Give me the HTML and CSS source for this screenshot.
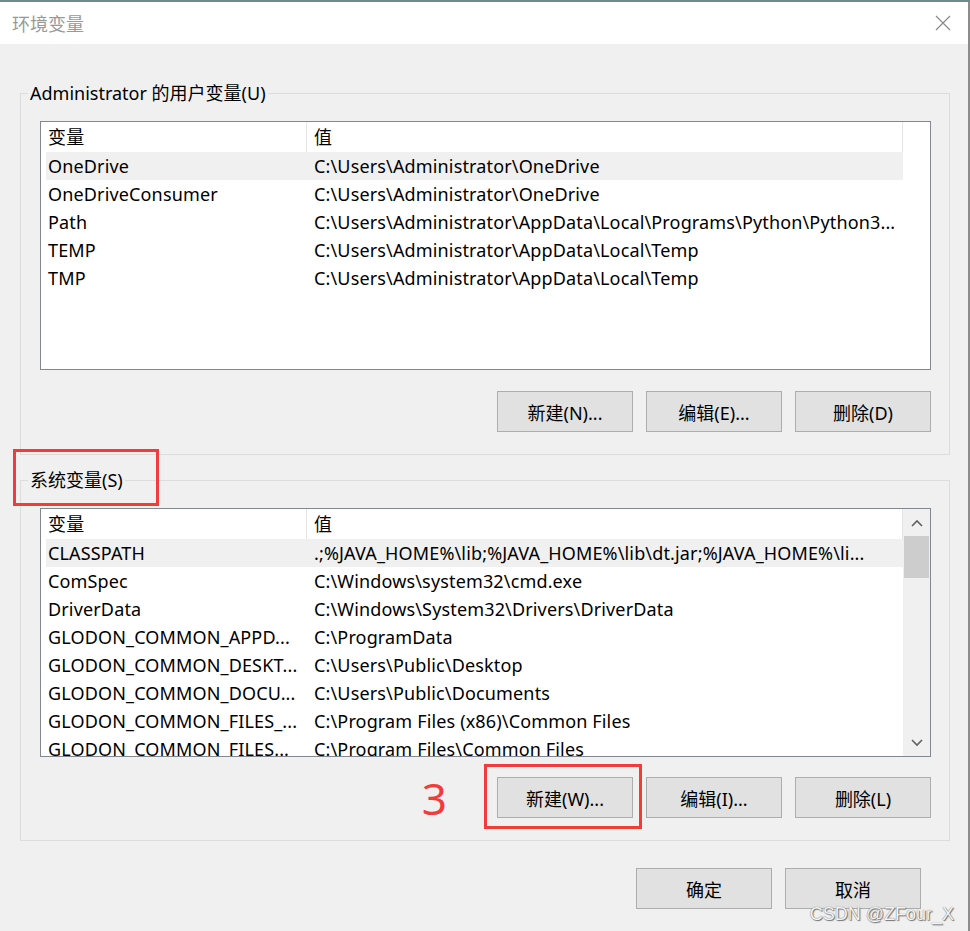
FILE: index.html
```html
<!DOCTYPE html>
<html lang="zh-CN">
<head>
    <meta charset="UTF-8">
    <title>环境变量</title>
    <link rel="stylesheet" href="styles.css">
</head>
<body>
    <div class="window">
        <div class="titlebar">
            <span class="title">环境变量</span>
            <svg class="close" width="16" height="16" viewBox="0 0 16 16">
                <path d="M1 1 L15 15 M15 1 L1 15" stroke="#8a8a8a" stroke-width="1.2" fill="none"/>
            </svg>
        </div>

        <div class="content">
            <fieldset class="group">
                <legend>Administrator 的用户变量(U)</legend>
                <div class="list">
                    <div class="list-body">
                        <div class="row head">
                            <div class="cell name">变量</div>
                            <div class="cell value">值</div>
                        </div>
                        <div class="row selected">
                            <div class="cell name">OneDrive</div>
                            <div class="cell value">C:\Users\Administrator\OneDrive</div>
                        </div>
                        <div class="row">
                            <div class="cell name">OneDriveConsumer</div>
                            <div class="cell value">C:\Users\Administrator\OneDrive</div>
                        </div>
                        <div class="row">
                            <div class="cell name">Path</div>
                            <div class="cell value">C:\Users\Administrator\AppData\Local\Programs\Python\Python3...</div>
                        </div>
                        <div class="row">
                            <div class="cell name">TEMP</div>
                            <div class="cell value">C:\Users\Administrator\AppData\Local\Temp</div>
                        </div>
                        <div class="row">
                            <div class="cell name">TMP</div>
                            <div class="cell value">C:\Users\Administrator\AppData\Local\Temp</div>
                        </div>
                    </div>
                </div>
                <div class="actions">
                    <button>新建(N)...</button>
                    <button>编辑(E)...</button>
                    <button>删除(D)</button>
                </div>
            </fieldset>

            <fieldset class="group system">
                <legend class="marked">系统变量(S)</legend>
                <div class="list">
                    <div class="list-body">
                        <div class="row head">
                            <div class="cell name">变量</div>
                            <div class="cell value">值</div>
                        </div>
                        <div class="row selected">
                            <div class="cell name">CLASSPATH</div>
                            <div class="cell value">.;%JAVA_HOME%\lib;%JAVA_HOME%\lib\dt.jar;%JAVA_HOME%\li...</div>
                        </div>
                        <div class="row">
                            <div class="cell name">ComSpec</div>
                            <div class="cell value">C:\Windows\system32\cmd.exe</div>
                        </div>
                        <div class="row">
                            <div class="cell name">DriverData</div>
                            <div class="cell value">C:\Windows\System32\Drivers\DriverData</div>
                        </div>
                        <div class="row">
                            <div class="cell name">GLODON_COMMON_APPD...</div>
                            <div class="cell value">C:\ProgramData</div>
                        </div>
                        <div class="row">
                            <div class="cell name">GLODON_COMMON_DESKT...</div>
                            <div class="cell value">C:\Users\Public\Desktop</div>
                        </div>
                        <div class="row">
                            <div class="cell name">GLODON_COMMON_DOCU...</div>
                            <div class="cell value">C:\Users\Public\Documents</div>
                        </div>
                        <div class="row">
                            <div class="cell name">GLODON_COMMON_FILES_...</div>
                            <div class="cell value">C:\Program Files (x86)\Common Files</div>
                        </div>
                        <div class="row">
                            <div class="cell name">GLODON_COMMON_FILES...</div>
                            <div class="cell value">C:\Program Files\Common Files</div>
                        </div>
                    </div>
                    <div class="scrollbar">
                        <div class="arrow">
                            <svg width="12" height="8" viewBox="0 0 12 8"><path d="M1 7 L6 2 L11 7" stroke="#606060" stroke-width="1.6" fill="none"/></svg>
                        </div>
                        <div class="track">
                            <div class="thumb"></div>
                        </div>
                        <div class="arrow">
                            <svg width="12" height="8" viewBox="0 0 12 8"><path d="M1 1 L6 6 L11 1" stroke="#606060" stroke-width="1.6" fill="none"/></svg>
                        </div>
                    </div>
                </div>
                <div class="actions">
                    <span class="step">3</span>
                    <button class="marked">新建(W)...</button>
                    <button>编辑(I)...</button>
                    <button>删除(L)</button>
                </div>
            </fieldset>

            <div class="footer">
                <button>确定</button>
                <button>取消</button>
            </div>
        </div>

        <div class="watermark">CSDN @ZFour_X</div>
    </div>
</body>
</html>
```

FILE: styles.css
```css
body {
    margin: 0;
    background: #6e8a8a;
    font-family: 'Noto Sans', 'Noto Sans CJK SC', sans-serif;
    font-size: 18px;
    color: #000;
}

.window {
    position: relative;
    width: 968px;
    height: 929px;
    margin-top: 2px;
    background: #f0f0f0;
    border-right: 2px solid #8c8c8c;
    overflow: hidden;
}

.titlebar {
    height: 42px;
    background: #fff;
    display: flex;
    align-items: center;
    justify-content: space-between;
    padding: 0 17px 0 12px;
}

.title {
    color: #999;
    font-size: 18px;
}

.close {
    display: block;
}

.content {
    padding: 37px 18px 0 20px;
}

.group {
    margin: 0;
    padding: 0 18px 22px 19px;
    border: 1px solid #dcdcdc;
    min-width: 0;
}

.group legend {
    margin-left: -12px;
    padding: 0 2px;
    line-height: 24px;
}

.group.system {
    margin-top: 13px;
}

.list {
    margin-top: 16px;
    height: 247px;
    border: 1px solid #828790;
    background: #fff;
    display: flex;
    overflow: hidden;
}

.list-body {
    width: 862px;
    padding-left: 5px;
    box-sizing: border-box;
}

.row {
    display: flex;
    height: 28px;
    align-items: center;
    white-space: nowrap;
    letter-spacing: 0.15px;
}

.row.head {
    height: 30px;
    margin-left: -5px;
    padding-left: 5px;
}

.row.selected {
    background: #f0f0f0;
}

.cell {
    overflow: hidden;
}

.cell.name {
    width: 259px;
    padding-left: 2px;
}

.cell.value {
    flex: 1;
    padding-left: 7px;
}

.head .cell.name {
    border-right: 1px solid #e5e5e5;
    height: 30px;
    line-height: 30px;
    width: 258px;
}

.head .cell.value {
    border-right: 1px solid #e5e5e5;
    height: 30px;
    line-height: 30px;
}

.scrollbar {
    width: 27px;
    background: #f0f0f0;
    display: flex;
    flex-direction: column;
}

.arrow {
    height: 27px;
    display: flex;
    align-items: center;
    justify-content: center;
}

.track {
    flex: 1;
    padding: 0 1px;
}

.thumb {
    height: 42px;
    background: #cdcdcd;
}

.actions {
    display: flex;
    justify-content: flex-end;
    align-items: center;
    gap: 13px;
    margin-top: 21px;
}

.system .actions {
    margin-top: 20px;
}

button {
    width: 136px;
    height: 41px;
    background: #e1e1e1;
    border: 1px solid #adadad;
    font-family: 'Noto Sans', 'Noto Sans CJK SC', sans-serif;
    font-size: 18px;
    color: #000;
    padding: 0;
}

.step {
    color: #f23c3c;
    font-size: 44px;
    line-height: 40px;
    margin-right: 37px;
}

.marked {
    position: relative;
}

.marked::after {
    content: '';
    position: absolute;
    border: 3px solid #f23c3c;
    pointer-events: none;
}

legend.marked::after {
    top: -19px;
    left: -15px;
    right: -34px;
    bottom: -14px;
}

button.marked::after {
    top: -14px;
    left: -14px;
    right: -10px;
    bottom: -12px;
}

.footer {
    display: flex;
    justify-content: flex-end;
    gap: 13px;
    margin-top: 27px;
    padding-right: 29px;
}

.watermark {
    position: absolute;
    right: 14px;
    bottom: 6px;
    font-family: 'Liberation Sans', sans-serif;
    font-size: 18px;
    color: #f4f4f4;
    text-shadow: 0 0 1px #555, 1px 1px 1px #777;
}
```
